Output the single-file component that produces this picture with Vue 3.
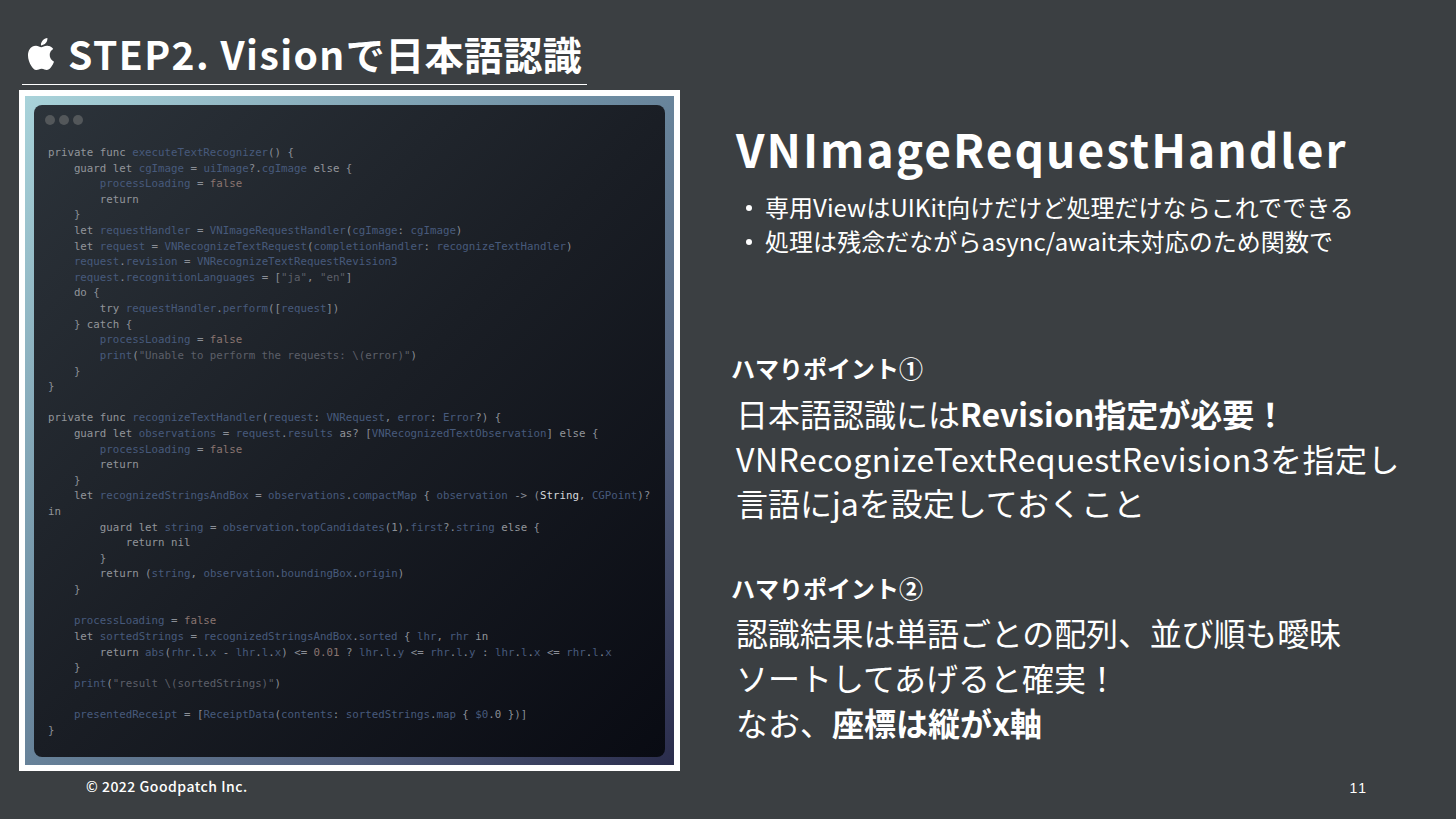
<script setup>
const source = `private func executeTextRecognizer() {
    guard let cgImage = uiImage?.cgImage else {
        processLoading = false
        return
    }
    let requestHandler = VNImageRequestHandler(cgImage: cgImage)
    let request = VNRecognizeTextRequest(completionHandler: recognizeTextHandler)
    request.revision = VNRecognizeTextRequestRevision3
    request.recognitionLanguages = ["ja", "en"]
    do {
        try requestHandler.perform([request])
    } catch {
        processLoading = false
        print("Unable to perform the requests: \\(error)")
    }
}

private func recognizeTextHandler(request: VNRequest, error: Error?) {
    guard let observations = request.results as? [VNRecognizedTextObservation] else {
        processLoading = false
        return
    }
    let recognizedStringsAndBox = observations.compactMap { observation -> (String, CGPoint)?
in
        guard let string = observation.topCandidates(1).first?.string else {
            return nil
        }
        return (string, observation.boundingBox.origin)
    }

    processLoading = false
    let sortedStrings = recognizedStringsAndBox.sorted { lhr, rhr in
        return abs(rhr.l.x - lhr.l.x) <= 0.01 ? lhr.l.y <= rhr.l.y : lhr.l.x <= rhr.l.x
    }
    print("result \\(sortedStrings)")

    presentedReceipt = [ReceiptData(contents: sortedStrings.map { $0.0 })]
}`

const tokenPattern = /("[^"]*")|\b(private|func|guard|let|else|return|do|try|catch|in|as|nil)\b|\b(false|0\.01|0\.0|1)\b|\b(String)\b|([A-Za-z_$][\w$]*|\$0)|(\s+|[^\sA-Za-z_$"]+)/g

function classify(match) {
  if (match[1]) return 'str'
  if (match[2]) return 'kw'
  if (match[3]) return 'num'
  if (match[4]) return 'type'
  if (match[5]) return 'id'
  return 'punct'
}

const lines = source.split('\n').map((line) =>
  [...line.matchAll(tokenPattern)].map((m) => ({ text: m[0], cls: classify(m) }))
)
</script>

<template>
  <main class="slide">
    <header class="title">
      <svg class="apple" viewBox="0 0 24 24" aria-hidden="true">
        <path fill="#fff" d="M12.152 6.896c-.948 0-2.415-1.078-3.96-1.04-2.04.027-3.91 1.183-4.961 3.014-2.117 3.675-.546 9.103 1.519 12.09 1.013 1.454 2.208 3.09 3.792 3.039 1.52-.065 2.09-.987 3.935-.987 1.831 0 2.35.987 3.96.948 1.637-.026 2.676-1.48 3.676-2.948 1.156-1.688 1.636-3.325 1.662-3.415-.039-.013-3.182-1.221-3.22-4.857-.026-3.04 2.48-4.494 2.597-4.559-1.429-2.09-3.623-2.324-4.39-2.376-2-.156-3.675 1.09-4.61 1.09zM15.53 3.83c.843-1.012 1.4-2.427 1.245-3.83-1.207.052-2.662.805-3.532 1.818-.78.896-1.454 2.338-1.273 3.714 1.338.104 2.715-.688 3.559-1.701" />
      </svg>
      <h1><span class="latin">STEP2. Vision</span>で日本語認識</h1>
    </header>

    <div class="content">
      <figure class="frame">
        <div class="backdrop">
          <div class="window">
            <div class="dots"><i></i><i></i><i></i></div>
            <pre class="code"><div v-for="(line, i) in lines" :key="i" class="code-line"><span v-for="(t, j) in line" :key="j" :class="t.cls">{{ t.text }}</span></div></pre>
          </div>
        </div>
      </figure>

      <section class="notes">
        <h2>VNImageRequestHandler</h2>
        <ul class="bullets">
          <li>専用ViewはUIKit向けだけど処理だけならこれでできる</li>
          <li>処理は残念だながらasync/await未対応のため関数で</li>
        </ul>

        <h3 class="first">ハマりポイント①</h3>
        <div class="body">
          <p>日本語認識には<b>Revision指定が必要！</b></p>
          <p class="wide">VNRecognizeTextRequestRevision3を指定し</p>
          <p>言語にjaを設定しておくこと</p>
        </div>

        <h3 class="second">ハマりポイント②</h3>
        <div class="body">
          <p class="snug">認識結果は単語ごとの配列、並び順も曖昧</p>
          <p>ソートしてあげると確実！</p>
          <p>なお、<b>座標は縦がx軸</b></p>
        </div>
      </section>
    </div>

    <footer class="footer">
      <span class="copy">© 2022 Goodpatch Inc.</span>
      <span class="page">11</span>
    </footer>
  </main>
</template>

<style>
html, body { margin: 0; background: #3b3f42; }
</style>

<style scoped>
.slide {
  width: 1456px;
  height: 819px;
  box-sizing: border-box;
  overflow: hidden;
  background: #3b3f42;
  color: #fff;
  font-family: "Noto Sans CJK JP", "Noto Sans", sans-serif;
  padding-top: 31px;
}
.title {
  display: flex;
  align-items: center;
  gap: 11px;
  box-sizing: border-box;
  width: 565px;
  height: 54px;
  margin-left: 22px;
  padding-left: 3px;
  border-bottom: 1px solid #fff;
}
.apple { width: 32px; height: 32px; flex: none; margin-top: -8px; }
h1 {
  margin: -10px 0 0;
  font-size: 39px;
  font-weight: 700;
  line-height: 48px;
  letter-spacing: 0.4px;
  white-space: nowrap;
}
.latin { letter-spacing: 1.45px; }
.content {
  display: flex;
  margin-top: 5px;
  padding-left: 19px;
}
.frame {
  margin: 0;
  width: 661px;
  height: 681px;
  flex: none;
  box-sizing: border-box;
  border: 6px solid #fff;
  background: #fff;
}
.backdrop {
  height: 100%;
  box-sizing: border-box;
  padding: 9px 9px 8px;
  background: linear-gradient(135deg, #a9d3da 0%, #6f8fa4 42%, #515e7b 75%, #2a2c4c 100%);
}
.window {
  height: 100%;
  box-sizing: border-box;
  border-radius: 8px;
  padding: 10px 14px 0;
  background: linear-gradient(135deg, #2c333a 0%, #1a1e25 50%, #090b13 100%);
}
.dots { display: flex; gap: 4px; height: 10px; margin-left: -3px; }
.dots i { width: 10px; height: 10px; border-radius: 50%; background: #53575a; }
.code {
  margin: 20px 0 0;
  font-family: "DejaVu Sans Mono", "Liberation Mono", monospace;
  font-size: 10.75px;
  line-height: 15.62px;
  white-space: pre;
}
.code-line { height: 15.62px; }
.kw { color: #92959a; }
.id { color: #475a7c; }
.punct { color: #8a8e96; }
.str { color: #5c5f68; }
.num { color: #8a7570; }
.type { color: #d6d8dc; }

.notes {
  flex: 1;
  min-width: 0;
  padding-left: 53px;
}
h2 {
  margin: 23px 0 0 3px;
  font-size: 46px;
  line-height: 70px;
  font-weight: 700;
  letter-spacing: 2px;
  white-space: nowrap;
}
.bullets {
  list-style: none;
  margin: 7px 0 0;
  padding: 0 0 0 32px;
  font-size: 24px;
  line-height: 34px;
  font-weight: 400;
  letter-spacing: 0.05px;
}
.bullets li { position: relative; white-space: nowrap; }
.bullets li::before {
  content: "";
  position: absolute;
  left: -19px;
  top: 15px;
  width: 6px;
  height: 6px;
  border-radius: 50%;
  background: #fff;
}
h3 {
  margin: 0 0 0 -2px;
  font-size: 24px;
  line-height: 30px;
  font-weight: 700;
  white-space: nowrap;
}
h3.first { margin-top: 95px; }
h3.second { margin-top: 48px; margin-bottom: -1px; }
.body { margin: 8px 0 0 3px; font-size: 32px; line-height: 44.7px; }
.body p { margin: 0; white-space: nowrap; }
.body b { font-weight: 700; }
.body .wide { letter-spacing: 0.5px; }
.body .snug { letter-spacing: -0.15px; }

.footer {
  display: flex;
  justify-content: space-between;
  align-items: center;
  padding: 4px 88px 0 86px;
}
.copy { font-size: 14px; line-height: 20px; font-weight: 500; letter-spacing: 0.5px; }
.page { font-family: "Liberation Sans", sans-serif; font-size: 14px; line-height: 16px; margin-top: 5px; letter-spacing: 2px; }
</style>
